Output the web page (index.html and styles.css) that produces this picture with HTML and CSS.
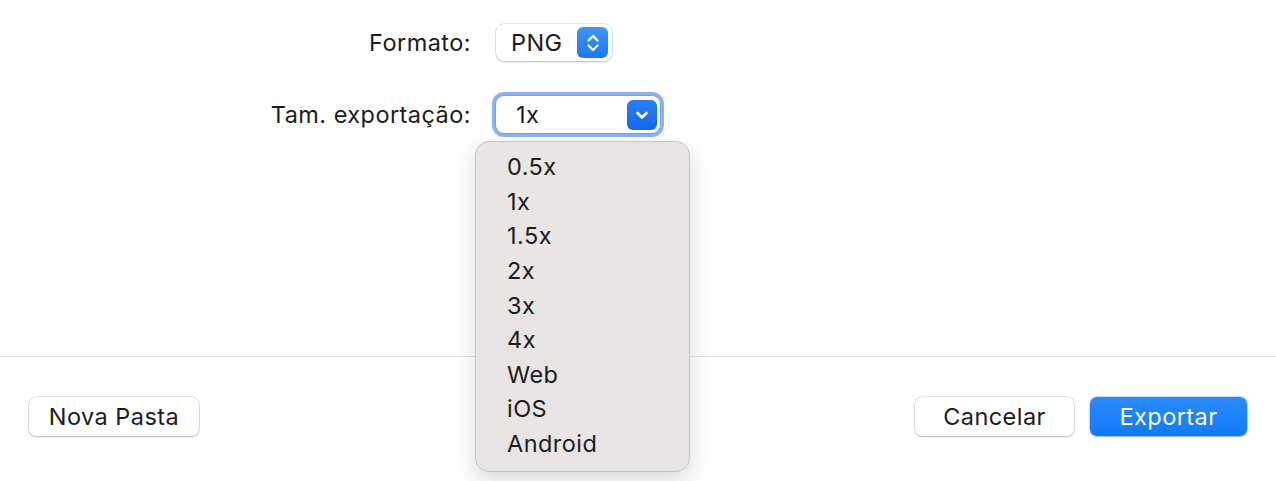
FILE: index.html
```html
<!DOCTYPE html>
<html lang="pt">
<head>
<meta charset="utf-8">
<title>Exportar</title>
<link rel="stylesheet" href="styles.css">
</head>
<body>
<div class="dialog">
  <div class="main">
    <div class="form">
      <div class="label">Formato:</div>
      <div class="control">
        <div class="popup popup-format">
          <span class="value">PNG</span>
          <span class="stepper">
            <svg width="16" height="22" viewBox="0 0 16 22"><path d="M3.5 8.5 L8 4 L12.5 8.5 M3.5 13.5 L8 18 L12.5 13.5" fill="none" stroke="#fff" stroke-width="2.4" stroke-linecap="round" stroke-linejoin="round"/></svg>
          </span>
        </div>
      </div>
      <div class="label">Tam. exportação:</div>
      <div class="control">
        <div class="popup popup-size">
          <span class="value">1x</span>
          <span class="chev">
            <svg width="16" height="12" viewBox="0 0 16 12"><path d="M3.5 4 L8 8.5 L12.5 4" fill="none" stroke="#fff" stroke-width="2.6" stroke-linecap="round" stroke-linejoin="round"/></svg>
          </span>
        </div>
      </div>
    </div>
  </div>
  <div class="separator"></div>
  <div class="footer">
    <button class="btn">Nova Pasta</button>
    <div class="spacer"></div>
    <button class="btn">Cancelar</button>
    <button class="btn btn-primary">Exportar</button>
  </div>
  <ul class="menu">
    <li>0.5x</li>
    <li>1x</li>
    <li>1.5x</li>
    <li>2x</li>
    <li>3x</li>
    <li>4x</li>
    <li>Web</li>
    <li>iOS</li>
    <li>Android</li>
  </ul>
</div>
</body>
</html>
```
FILE: styles.css
```css
html, body {
  margin: 0;
  padding: 0;
  background: #ffffff;
}
body {
  font-family: Inter, "Liberation Sans", Arial, sans-serif;
  font-size: 23.5px;
  letter-spacing: 0.45px;
  color: #1c1c1c;
  width: 1276px;
  height: 481px;
  overflow: hidden;
}
.dialog {
  position: relative;
  width: 1276px;
  height: 481px;
}
.main {
  height: 356px;
  box-sizing: border-box;
  padding-top: 24px;
}
.form {
  display: grid;
  grid-template-columns: 471px auto;
  column-gap: 25px;
  row-gap: 35px;
  align-items: center;
}
.label {
  text-align: right;
}
.control {
  display: flex;
}
.popup {
  display: flex;
  align-items: center;
  box-sizing: border-box;
  background: #fff;
  border-radius: 8px;
  box-shadow: 0 0 0 0.5px rgba(0,0,0,0.18), 0 1px 2px rgba(0,0,0,0.18);
}
.popup-format {
  width: 116px;
  height: 37px;
  padding: 0 4px 0 15px;
  justify-content: space-between;
}
.stepper {
  width: 31px;
  height: 31px;
  border-radius: 6px;
  background: linear-gradient(#3f95fb, #1c78f2);
  display: flex;
  align-items: center;
  justify-content: center;
}
.popup-size {
  width: 164px;
  height: 37px;
  padding: 0 3px 0 20px;
  justify-content: space-between;
  box-shadow: 0 0 0 1px rgba(80,130,220,0.35), 0 0 0 4px #8db2f3;
}
.chev {
  width: 30px;
  height: 30px;
  border-radius: 6px;
  background: linear-gradient(#2a7ff6, #1466e8);
  display: flex;
  align-items: center;
  justify-content: center;
}
.separator {
  height: 1px;
  background: #e2e2e2;
}
.footer {
  display: flex;
  align-items: center;
  padding: 40px 29px 0 29px;
  gap: 16px;
}
.spacer {
  flex: 1;
}
.btn {
  font-family: inherit;
  font-size: 23.5px;
  letter-spacing: 0.45px;
  color: #1c1c1c;
  height: 39px;
  border: none;
  border-radius: 7px;
  background: #fff;
  box-shadow: 0 0 0 0.5px rgba(0,0,0,0.2), 0 1px 2px rgba(0,0,0,0.2);
  padding: 0;
  width: 159px;
}
.footer .btn:first-child {
  width: 170px;
}
.btn-primary {
  width: 157px;
  color: #fff;
  background: linear-gradient(#2a8cfc, #117af7);
  box-shadow: 0 0 0 0.5px rgba(0,90,220,0.4), 0 1px 2px rgba(0,60,160,0.25);
}
.menu {
  position: absolute;
  left: 475px;
  top: 141px;
  width: 215px;
  box-sizing: border-box;
  margin: 0;
  padding: 8px 0 9px 0;
  list-style: none;
  background: #e9e5e5;
  border: 1px solid #c8c5c5;
  border-radius: 14px;
  box-shadow: 0 8px 20px rgba(0,0,0,0.15);
}
.menu li {
  height: 34.65px;
  line-height: 34.65px;
  padding-left: 31px;
}
```
